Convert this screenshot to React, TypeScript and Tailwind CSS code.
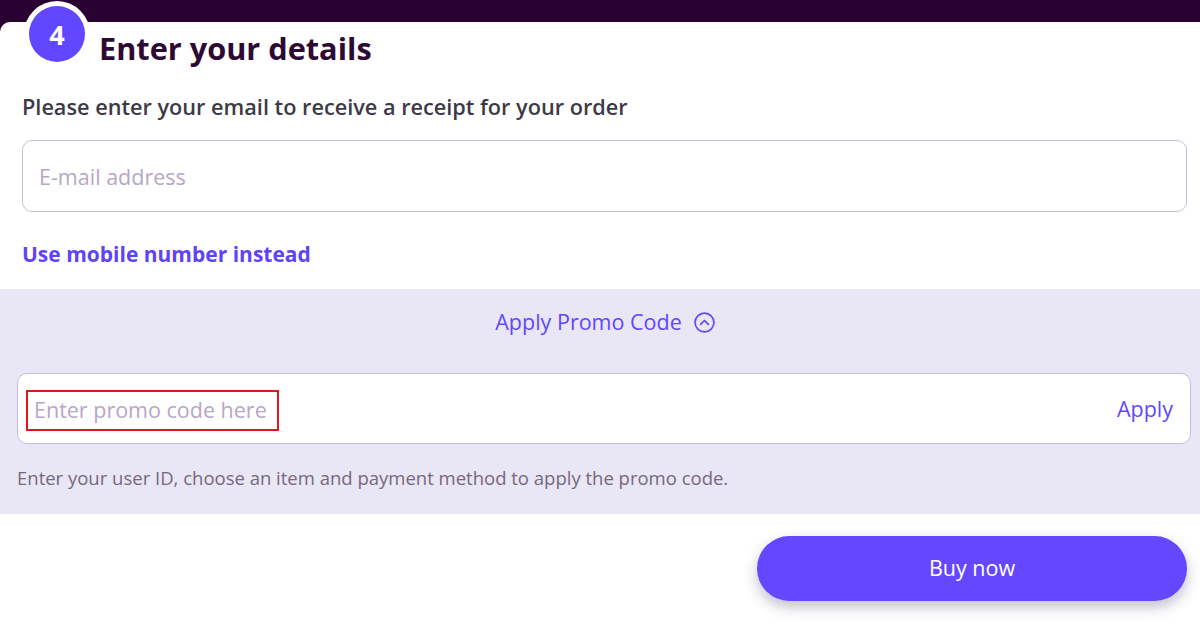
import { useState } from 'react';

export default function App() {
  const [email, setEmail] = useState('');
  const [promo, setPromo] = useState('');

  return (
    <div className="h-[627px] w-[1200px] overflow-hidden bg-[#2a0033] pt-[22px] font-['Open_Sans',sans-serif]">
      <div className="relative h-[605px] rounded-tl-[10px] bg-white">
        {/* step badge overlaps the dark bar */}
        <div className="absolute left-[24px] top-[-21px] flex h-[66px] w-[66px] items-center justify-center rounded-full bg-white">
          <span className="flex h-[56px] w-[56px] items-center justify-center rounded-full bg-[#6247ff] text-[27px] font-bold leading-none text-white">
            4
          </span>
        </div>

        <h2 className="pl-[99px] pt-[8px] text-[30.7px] font-bold leading-[36px] text-[#2d0a33]">
          Enter your details
        </h2>

        <div className="pl-[22px] pr-[13px]">
          <p className="mt-[27px] text-[21.7px] font-semibold leading-[28px] text-[#3d3a48]">
            Please enter your email to receive a receipt for your order
          </p>
          <input
            type="email"
            value={email}
            onChange={(e) => setEmail(e.target.value)}
            placeholder="E-mail address"
            className="mt-[19px] block h-[72px] w-full rounded-[10px] border border-[#c9bfd8] px-[16px] text-[21.5px] text-[#2d0a33] outline-none placeholder:text-[#b6a7c6]"
          />
          <button
            type="button"
            className="mt-[28px] block text-[21px] font-bold leading-[28px] text-[#5f44f6]"
          >
            Use mobile number instead
          </button>
        </div>

        <div className="mt-[21px] bg-[#e9e6f6] pb-[24px] pl-[17px] pr-[9px] pt-[19px]">
          <button
            type="button"
            className="mx-auto flex items-center gap-[12px] pl-[2px] text-[21.5px] leading-[28px] text-[#6247ff]"
          >
            Apply Promo Code
            <svg width="21" height="21" viewBox="0 0 20 20" fill="none" stroke="currentColor" strokeWidth="1.6">
              <circle cx="10" cy="10" r="9" />
              <path d="M6.3 11.8 10 8.1l3.7 3.7" strokeLinecap="round" strokeLinejoin="round" />
            </svg>
          </button>

          <div className="mt-[37px] flex h-[71px] items-center rounded-[10px] border border-[#c8bdd6] bg-white pl-[8px] pr-[17px]">
            <div className="mt-[3px] flex h-[41px] w-[253px] items-center border-2 border-[#e0161e] pl-[6px]">
              <input
                value={promo}
                onChange={(e) => setPromo(e.target.value)}
                placeholder="Enter promo code here"
                className="w-full bg-transparent text-[21.5px] text-[#2d0a33] outline-none placeholder:text-[#b6a7c6]"
              />
            </div>
            <button type="button" className="ml-auto mt-[2px] text-[21.5px] text-[#6247ff]">
              Apply
            </button>
          </div>

          <p className="mt-[22px] text-[18.5px] leading-[24px] text-[#76697e]">
            Enter your user ID, choose an item and payment method to apply the promo code.
          </p>
        </div>

        <div className="flex justify-end pr-[13px] pt-[22px]">
          <button
            type="button"
            className="h-[65px] w-[430px] rounded-full bg-[#6547ff] text-[21.5px] text-white shadow-[0_6px_14px_rgba(40,20,80,0.28)]"
          >
            Buy now
          </button>
        </div>
      </div>
    </div>
  );
}
